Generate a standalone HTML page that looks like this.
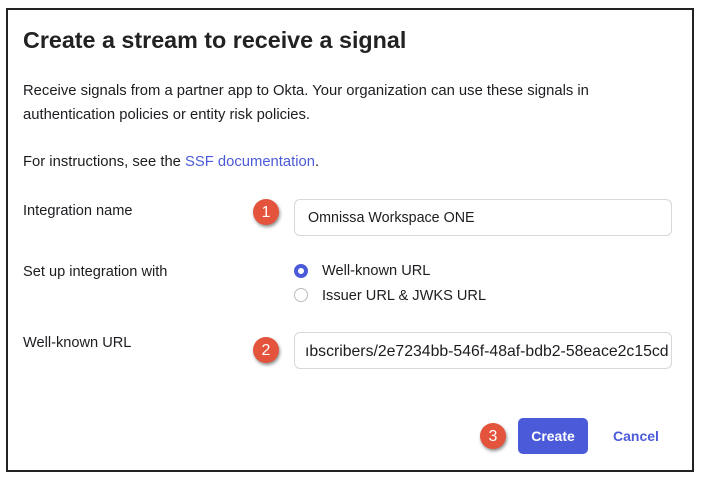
<!DOCTYPE html>
<html><head><style>
body{margin:0;width:702px;height:483px;background:#fff;font-family:"Liberation Sans",sans-serif;color:#1d1d21;position:relative;overflow:hidden}
.box{position:absolute;left:6px;top:8px;width:684px;height:460px;border:2px solid #222}
.a{position:absolute;white-space:nowrap}
.t{font-size:14.6px;line-height:16px}
.p{font-size:14.8px;line-height:16px}
.inp{position:absolute;left:294px;width:378px;height:37px;border:1px solid #d7d7dc;border-radius:6px;font-size:14.3px;line-height:37px;box-sizing:border-box;padding-left:13px;overflow:hidden;white-space:nowrap}
.badge{position:absolute;width:26px;height:26px;border-radius:50%;background:#e4533b;color:#fff;font-size:16px;box-shadow:1px 2px 3px rgba(0,0,0,.45)}
.badge span{position:absolute;left:0;width:26px;text-align:center;top:5px;line-height:18px}
.radio{position:absolute;width:14px;height:14px;border-radius:50%;box-sizing:border-box}
</style></head><body>
<div class="box"></div>
<div class="a" style="left:23px;top:27px;font-size:23.3px;font-weight:bold;color:#222">Create a stream to receive a signal</div>
<div class="a p" style="left:23px;top:83px">Receive signals from a partner app to Okta. Your organization can use these signals in</div>
<div class="a p" style="left:23px;top:107px">authentication policies or entity risk policies.</div>
<div class="a p" style="left:23px;top:154px">For instructions, see the <span style="color:#4b5ad8">SSF documentation</span>.</div>
<div class="a t" style="left:23px;top:203px">Integration name</div>
<div class="badge" style="left:253px;top:199px"><span>1</span></div>
<div class="inp" style="top:199px">Omnissa Workspace ONE</div>
<div class="a t" style="left:23px;top:264px">Set up integration with</div>
<div class="radio" style="left:294px;top:264px;border:4px solid #4b5ad8"></div>
<div class="a t" style="left:322px;top:263px">Well-known URL</div>
<div class="radio" style="left:294px;top:288px;border:1px solid #bbb"></div>
<div class="a t" style="left:322px;top:288px">Issuer URL &amp; JWKS URL</div>
<div class="a t" style="left:23px;top:335px">Well-known URL</div>
<div class="badge" style="left:253px;top:337px"><span>2</span></div>
<div class="inp" style="top:332px;padding-left:10px;font-size:15.8px">ıbscribers/2e7234bb-546f-48af-bdb2-58eace2c15cd</div>
<div class="badge" style="left:480px;top:423px"><span>3</span></div>
<div class="a" style="left:518px;top:418px;width:70px;height:36px;background:#4b5ad8;border-radius:5px;color:#fff;font-size:14px;font-weight:bold;line-height:36px;text-align:center">Create</div>
<div class="a" style="left:613px;top:428px;color:#4b5ad8;font-size:14px;font-weight:bold">Cancel</div>
</body></html>
